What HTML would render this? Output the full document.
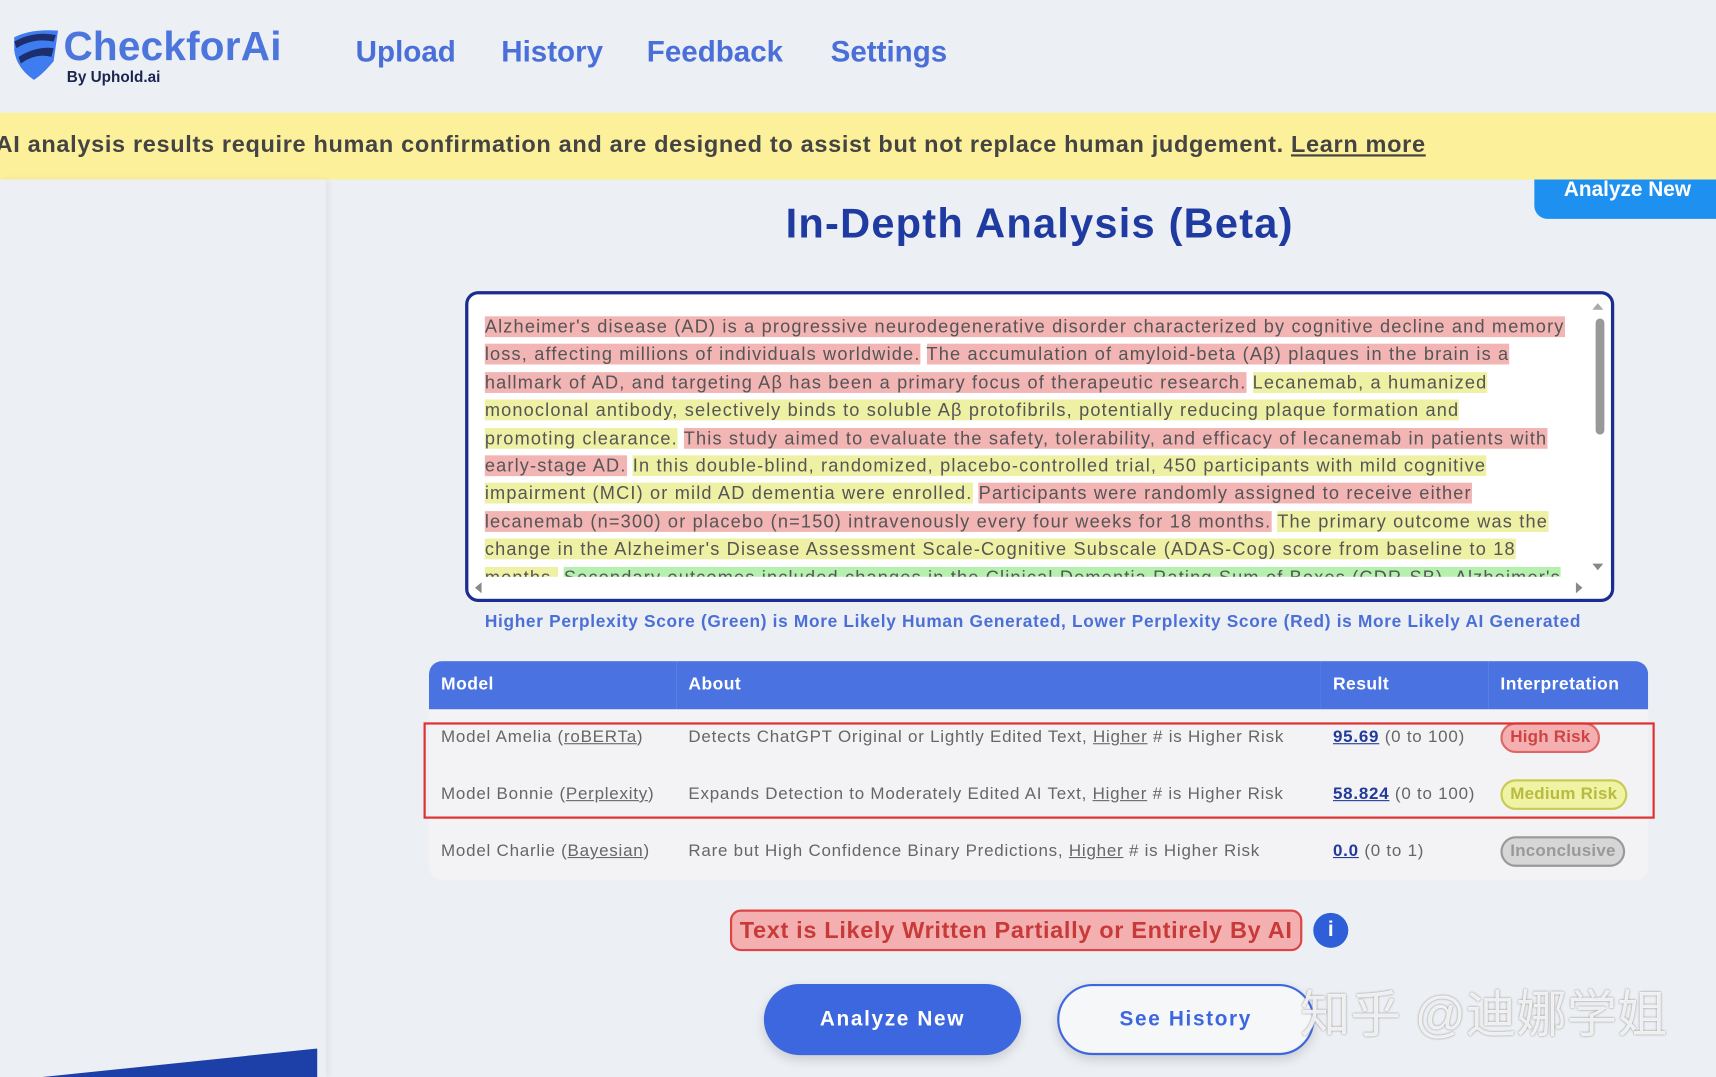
<!DOCTYPE html>
<html><head><meta charset="utf-8"><style>
*{margin:0;padding:0;box-sizing:border-box}
html,body{width:1716px;height:1077px;overflow:hidden;background:#eceff3;font-family:"Liberation Sans",sans-serif}
#w{width:1568px;height:984px;transform:scale(1.09439,1.09451);transform-origin:0 0;position:relative}
.a{position:absolute}
.nav{color:#4a6fd8;font-weight:bold;font-size:27px;top:32px}
.r{background:#f3b4b4}.y{background:#eef0a4}.g{background:#b5f0ae}
.ln{white-space:nowrap;height:25.4px;line-height:25.4px;font-size:16.6px;color:#555;letter-spacing:1.07px}
th{background:#4a72e0;color:#fff;text-align:left;font-size:16px;padding:0 11px;height:44px;font-weight:bold;letter-spacing:0.4px}
td{font-size:15.5px;color:#666;padding:0 11px;height:52px;white-space:nowrap;letter-spacing:0.7px}
td u{color:#666}
.b{color:#223a99;font-weight:bold;text-decoration:underline}
.pill{display:inline-block;border-radius:14px;padding:3px 7px;font-weight:bold;font-size:15.5px;border:2px solid;letter-spacing:0.2px}
</style></head><body><div id="w">
<svg class="a" style="left:9px;top:26px" width="46" height="48" viewBox="0 0 46 48"><path d="M4 8 Q20 0 44 2 L40 30 Q30 42 22 47 Q6 36 4 20Z" fill="#3e7cf0"/><path d="M4 12 Q22 2 42 6 L40 12 Q22 8 6 18Z" fill="#1d2e6e"/><path d="M8 26 Q24 16 40 18 L38 26 Q24 22 10 32Z" fill="#1d2e6e"/></svg>
<div class="a" style="left:58px;top:22px;font-size:37px;font-weight:bold;color:#4d76dd;letter-spacing:0.2px">CheckforAi</div>
<div class="a" style="left:61px;top:62px;font-size:14px;font-weight:bold;color:#1b2550">By Uphold.ai</div>
<div class="a nav" style="left:325px">Upload</div>
<div class="a nav" style="left:458px">History</div>
<div class="a nav" style="left:591px">Feedback</div>
<div class="a nav" style="left:759px">Settings</div>
<div class="a" style="left:0;top:103px;width:1568px;height:61px;background:#fdf09a"></div>
<div class="a" style="left:-4px;top:120px;font-size:21.5px;font-weight:bold;color:#444;white-space:nowrap;letter-spacing:0.6px">AI analysis results require human confirmation and are designed to assist but not replace human judgement. <u>Learn more</u></div>
<div class="a" style="left:0;top:164px;width:298px;height:820px;background:#eceff3;box-shadow:2px 0 6px rgba(0,0,0,.06)"></div>
<div class="a" style="left:0;top:958px;width:290px;height:30px;background:#1d3fa8;clip-path:polygon(0 100%,100% 0,100% 100%)"></div>
<div class="a" style="left:1402px;top:164px;width:170px;height:36px;background:#1e90f0;border-radius:0 0 0 12px;color:#fff;font-weight:bold;font-size:19px;padding:0 0 0 27px;line-height:20px">Analyze New</div>
<div class="a" style="left:0;width:1900px;top:184px;text-align:center;font-size:38px;font-weight:bold;color:#1f3aa0;letter-spacing:1.1px">In-Depth Analysis (Beta)</div>
<div class="a" style="left:425px;top:266px;width:1050px;height:284px;border:3px solid #1b2e90;border-radius:12px;background:#fff;overflow:hidden">
<div style="position:absolute;left:15px;top:17px">
<div class="ln"><span class="r">Alzheimer's disease (AD) is a progressive neurodegenerative disorder characterized by cognitive decline and memory</span></div>
<div class="ln"><span class="r">loss, affecting millions of individuals worldwide.</span> <span class="r">The accumulation of amyloid-beta (Aβ) plaques in the brain is a</span></div>
<div class="ln"><span class="r">hallmark of AD, and targeting Aβ has been a primary focus of therapeutic research.</span> <span class="y">Lecanemab, a humanized</span></div>
<div class="ln"><span class="y">monoclonal antibody, selectively binds to soluble Aβ protofibrils, potentially reducing plaque formation and</span></div>
<div class="ln"><span class="y">promoting clearance.</span> <span class="r">This study aimed to evaluate the safety, tolerability, and efficacy of lecanemab in patients with</span></div>
<div class="ln"><span class="r">early-stage AD.</span> <span class="y">In this double-blind, randomized, placebo-controlled trial, 450 participants with mild cognitive</span></div>
<div class="ln"><span class="y">impairment (MCI) or mild AD dementia were enrolled.</span> <span class="r">Participants were randomly assigned to receive either</span></div>
<div class="ln"><span class="r">lecanemab (n=300) or placebo (n=150) intravenously every four weeks for 18 months.</span> <span class="y">The primary outcome was the</span></div>
<div class="ln"><span class="y">change in the Alzheimer's Disease Assessment Scale-Cognitive Subscale (ADAS-Cog) score from baseline to 18</span></div>
<div class="ln"><span class="y">months.</span> <span class="g">Secondary outcomes included changes in the Clinical Dementia Rating Sum of Boxes (CDR-SB), Alzheimer's</span></div>
</div>
<div style="position:absolute;left:0;bottom:0;width:100%;height:20px;background:#fff"></div>
<div style="position:absolute;left:6px;bottom:5px;width:0;height:0;border:5px solid transparent;border-right:6px solid #888;border-left:0"></div>
<div style="position:absolute;right:26px;bottom:5px;width:0;height:0;border:5px solid transparent;border-left:6px solid #888;border-right:0"></div>
<div style="position:absolute;right:7px;top:8px;width:0;height:0;border:5px solid transparent;border-bottom:6px solid #aaa;border-top:0"></div>
<div style="position:absolute;right:7px;bottom:26px;width:0;height:0;border:5px solid transparent;border-top:6px solid #888;border-bottom:0"></div>
<div style="position:absolute;right:6px;top:22px;width:8px;height:106px;background:#999;border-radius:4px"></div>
</div>
<div class="a" style="left:443px;top:560px;font-size:15.8px;font-weight:bold;color:#4a6fd8;white-space:nowrap;letter-spacing:0.62px">Higher Perplexity Score (Green) is More Likely Human Generated, Lower Perplexity Score (Red) is More Likely AI Generated</div>
<div class="a" style="left:392px;top:604px;width:1114px;height:200px;background:#f3f3f5;border-radius:12px;overflow:hidden">
<table style="border-collapse:collapse;width:100%"><tr><th style="width:226px">Model</th><th style="width:589px">About</th><th style="width:153px">Result</th><th>Interpretation</th></tr>
<tr><td>Model Amelia (<u>roBERTa</u>)</td><td>Detects ChatGPT Original or Lightly Edited Text, <u>Higher</u> # is Higher Risk</td><td><span class="b">95.69</span> (0 to 100)</td><td><span class="pill" style="background:#f4b0b0;border-color:#d66;color:#c44">High Risk</span></td></tr>
<tr><td>Model Bonnie (<u>Perplexity</u>)</td><td>Expands Detection to Moderately Edited AI Text, <u>Higher</u> # is Higher Risk</td><td><span class="b">58.824</span> (0 to 100)</td><td><span class="pill" style="background:#f1f3a4;border-color:#c8cc55;color:#b8bb40">Medium Risk</span></td></tr>
<tr><td>Model Charlie (<u>Bayesian</u>)</td><td>Rare but High Confidence Binary Predictions, <u>Higher</u> # is Higher Risk</td><td><span class="b">0.0</span> (0 to 1)</td><td><span class="pill" style="background:#d6d6d6;border-color:#999;color:#999">Inconclusive</span></td></tr>
</table></div>
<div class="a" style="left:387px;top:660px;width:1125px;height:88px;border:2px solid #e03030"></div>
<div class="a" style="left:667px;top:831px;width:523px;height:38px;background:#f4b0b0;border:2px solid #d44;border-radius:10px;color:#c83a3a;font-weight:bold;font-size:21.5px;line-height:34px;text-align:center;white-space:nowrap;letter-spacing:0.6px">Text is Likely Written Partially or Entirely By AI</div>
<div class="a" style="left:1200px;top:834px;width:32px;height:32px;border-radius:50%;background:#2e5fd8;color:#fff;font-weight:bold;text-align:center;line-height:32px;font-size:19px">i</div>
<div class="a" style="left:698px;top:899px;width:235px;height:65px;border-radius:33px;background:#3d67de;color:#fff;font-weight:bold;font-size:19px;letter-spacing:1.5px;text-align:center;line-height:65px;box-shadow:0 4px 10px rgba(0,0,0,.15)">Analyze New</div>
<div class="a" style="left:966px;top:899px;width:235px;height:65px;border-radius:33px;background:#f6f7f9;border:2px solid #3d67de;color:#3d67de;font-weight:bold;font-size:19px;letter-spacing:1.5px;text-align:center;line-height:61px;box-shadow:0 4px 10px rgba(0,0,0,.15)">See History</div>
<div class="a" style="left:1188px;top:891px;font-size:46px;color:rgba(255,255,255,.85);font-family:'Liberation Sans','Noto Sans CJK SC',sans-serif;white-space:nowrap;text-shadow:0 0 2px #888">知乎 @迪娜学姐</div>
</div></body></html>
